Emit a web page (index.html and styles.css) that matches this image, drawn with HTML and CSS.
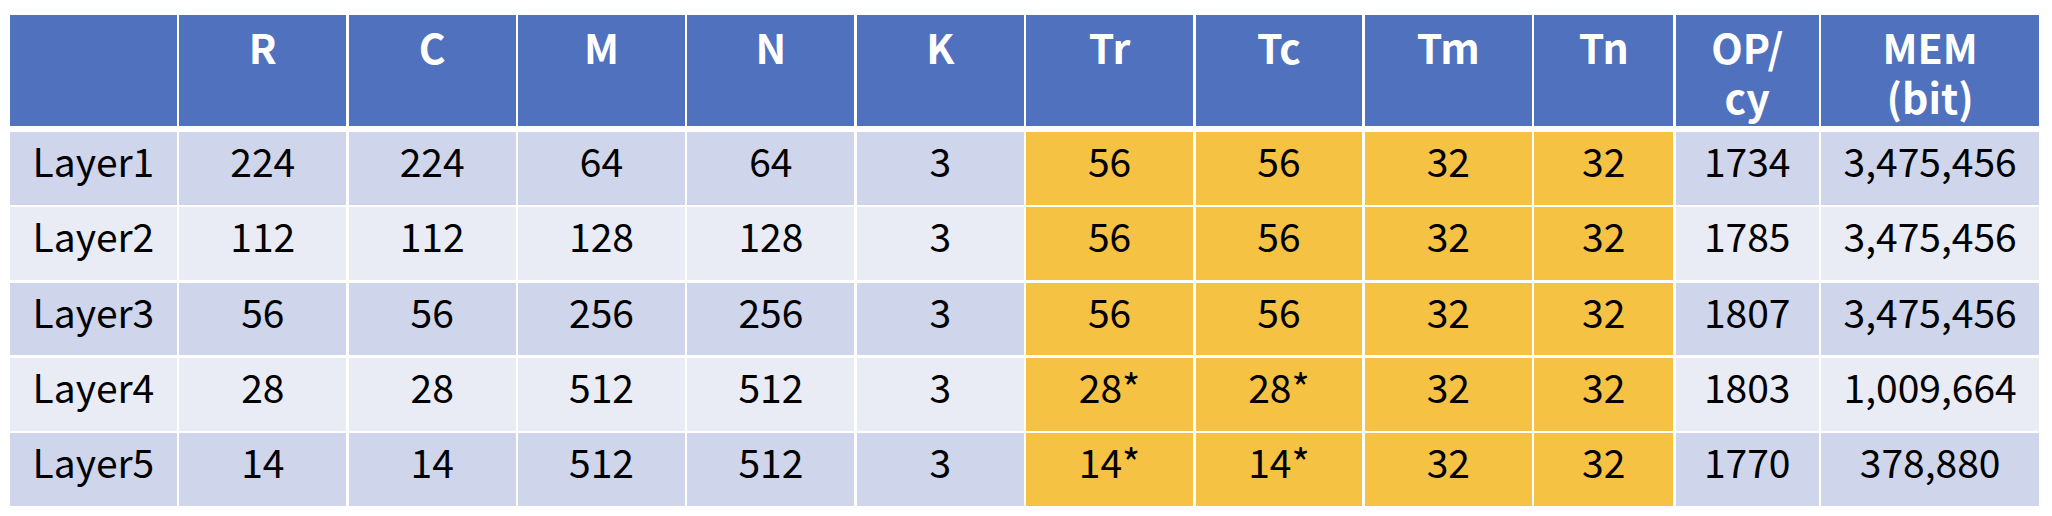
FILE: index.html
```html
<!DOCTYPE html>
<html lang="en">
<head>
<meta charset="utf-8">
<title>Layer table</title>
<link rel="stylesheet" href="styles.css">
</head>
<body>
<div class="table">
  <div class="thead grid">
    <div class="th"></div>
    <div class="th">R</div>
    <div class="th">C</div>
    <div class="th">M</div>
    <div class="th">N</div>
    <div class="th">K</div>
    <div class="th">Tr</div>
    <div class="th">Tc</div>
    <div class="th">Tm</div>
    <div class="th">Tn</div>
    <div class="th">OP/<br>cy</div>
    <div class="th">MEM<br>(bit)</div>
  </div>
  <div class="tbody grid">
    <div class="td odd">Layer1</div><div class="td odd">224</div><div class="td odd">224</div><div class="td odd">64</div><div class="td odd">64</div><div class="td odd">3</div><div class="td hl">56</div><div class="td hl">56</div><div class="td hl">32</div><div class="td hl">32</div><div class="td odd">1734</div><div class="td odd">3,475,456</div>
    <div class="td even">Layer2</div><div class="td even">112</div><div class="td even">112</div><div class="td even">128</div><div class="td even">128</div><div class="td even">3</div><div class="td hl">56</div><div class="td hl">56</div><div class="td hl">32</div><div class="td hl">32</div><div class="td even">1785</div><div class="td even">3,475,456</div>
    <div class="td odd">Layer3</div><div class="td odd">56</div><div class="td odd">56</div><div class="td odd">256</div><div class="td odd">256</div><div class="td odd">3</div><div class="td hl">56</div><div class="td hl">56</div><div class="td hl">32</div><div class="td hl">32</div><div class="td odd">1807</div><div class="td odd">3,475,456</div>
    <div class="td even">Layer4</div><div class="td even">28</div><div class="td even">28</div><div class="td even">512</div><div class="td even">512</div><div class="td even">3</div><div class="td hl">28*</div><div class="td hl">28*</div><div class="td hl">32</div><div class="td hl">32</div><div class="td even">1803</div><div class="td even">1,009,664</div>
    <div class="td odd">Layer5</div><div class="td odd">14</div><div class="td odd">14</div><div class="td odd">512</div><div class="td odd">512</div><div class="td odd">3</div><div class="td hl">14*</div><div class="td hl">14*</div><div class="td hl">32</div><div class="td hl">32</div><div class="td odd">1770</div><div class="td odd">378,880</div>
  </div>
</div>
</body>
</html>
```

FILE: styles.css
```css
html, body {
  margin: 0;
  padding: 0;
  background: #ffffff;
}

body {
  font-family: "Noto Sans CJK KR", "Noto Sans", sans-serif;
}

.table {
  padding: 15px 0 0 10px;
  width: 2029px;
}

.grid {
  display: grid;
  grid-template-columns: repeat(9, 166.86px) 139px 143px 217.75px;
  column-gap: 2.5px;
}

.thead {
  grid-template-rows: 111px;
  margin-bottom: 6px;
}

.tbody {
  grid-template-rows: repeat(5, 72.75px);
  row-gap: 2.5px;
}

.th {
  background: #4f71be;
  color: #ffffff;
  font-weight: 700;
  font-size: 41px;
  line-height: 50px;
  text-align: center;
  padding-top: 6px;
}

.td {
  color: #000000;
  font-size: 39px;
  line-height: 39px;
  text-align: center;
  padding-top: 9px;
  white-space: nowrap;
}

.odd {
  background: #cfd5ea;
}

.even {
  background: #e9ebf5;
}

.hl {
  background: #f5c243;
}
```
